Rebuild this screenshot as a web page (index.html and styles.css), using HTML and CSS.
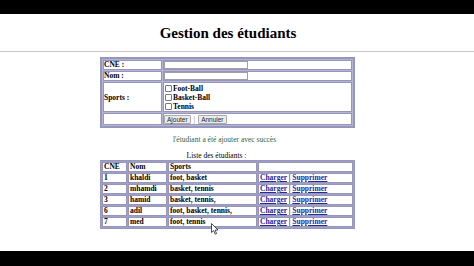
FILE: index.html
```html
<!DOCTYPE html>
<html lang="fr">
  <head>
    <meta charset="UTF-8"/>
    <link rel="stylesheet" href="styles.css">
    <title>Gestion des étudiants</title>
  </head>
  <body>
    <div class="letterbox"></div>
    <main class="page">
      <h1 class="page_title">Gestion des étudiants</h1>
      <hr class="page_rule"/>
      <div class="content">
        <form>
          <table class="formTable">
            <tr class="formTable_row">
              <td class="formTable_label">CNE :</td>
              <td><input class="formTable_input" type="text"/></td>
            </tr>
            <tr class="formTable_row">
              <td class="formTable_label">Nom :</td>
              <td><input class="formTable_input" type="text"/></td>
            </tr>
            <tr class="formTable_sports">
              <td class="formTable_label">Sports :</td>
              <td>
                <label class="sportOption"><span class="sportOption_box"></span>Foot-Ball</label>
                <label class="sportOption"><span class="sportOption_box"></span>Basket-Ball</label>
                <label class="sportOption"><span class="sportOption_box"></span>Tennis</label>
              </td>
            </tr>
            <tr class="formTable_buttons">
              <td></td>
              <td>
                <div class="buttonGroup">
                  <button class="formButton" type="button">Ajouter</button>
                  <span class="buttonGroup_sep">|</span>
                  <button class="formButton" type="button">Annuler</button>
                </div>
              </td>
            </tr>
          </table>
        </form>
        <p class="successMessage">l'étudiant a été ajouter avec succès</p>
        <p class="listTitle">Liste des étudiants :</p>
        <table class="studentTable">
          <tr>
            <td class="col_cne">CNE</td>
            <td class="col_nom">Nom</td>
            <td class="col_sports">Sports</td>
            <td></td>
          </tr>
          <tr>
            <td>1</td><td>khaldi</td><td>foot, basket</td>
            <td><a href="#">Charger</a> | <a href="#">Supprimer</a></td>
          </tr>
          <tr>
            <td>2</td><td>mhamdi</td><td>basket, tennis</td>
            <td><a href="#">Charger</a> | <a href="#">Supprimer</a></td>
          </tr>
          <tr>
            <td>3</td><td>hamid</td><td>basket, tennis,</td>
            <td><a href="#">Charger</a> | <a href="#">Supprimer</a></td>
          </tr>
          <tr>
            <td>6</td><td>adil</td><td>foot, basket, tennis,</td>
            <td><a href="#">Charger</a> | <a href="#">Supprimer</a></td>
          </tr>
          <tr>
            <td>7</td><td>med</td><td>foot, tennis</td>
            <td><a href="#">Charger</a> | <a href="#">Supprimer</a></td>
          </tr>
        </table>
      </div>
      <svg class="mouseCursor" width="8" height="12" viewBox="0 0 8 12">
        <path d="M0.5 0.5 L0.5 9.5 L2.6 7.6 L4.2 11.2 L5.6 10.6 L4.1 7.1 L7 7 Z" fill="#fff" stroke="#222" stroke-width="0.8" stroke-linejoin="round"/>
      </svg>
    </main>
    <div class="letterbox letterbox_bottom"></div>
  </body>
</html>
```

FILE: styles.css
```css
html, body {
  margin: 0;
  padding: 0;
}
body {
  width: 474px;
  height: 266px;
  display: flex;
  flex-direction: column;
  background-color: rgb(0, 0, 0);
  font-family: "Liberation Serif", "Times New Roman", serif;
  color: rgb(0, 0, 0);
  overflow: hidden;
}

.letterbox {
  height: 14px;
  background-color: rgb(0, 0, 0);
}
  .letterbox_bottom {
    height: 15px;
  }

.page {
  position: relative;
  flex: 1;
  background-color: rgb(255, 255, 255);
}
  .page_title {
    margin: 10px 0 0 0;
    padding-right: 18px;
    height: 18px;
    line-height: 18px;
    font-size: 15px;
    font-weight: bold;
    text-align: center;
    color: rgb(0, 0, 0);
  }
  .page_rule {
    margin: 9px 0 0 0;
    border: 0;
    border-top: 1px solid rgb(200, 200, 200);
    height: 0;
  }

.content {
  width: 255px;
  margin: 5px 0 0 100px;
  font-size: 7.5px;
}
  .content form {
    margin: 0;
  }

/* formulaire */
.formTable {
  width: 255px;
  border: 2px solid rgb(150, 150, 188);
  border-spacing: 1px;
  background-color: rgb(180, 180, 212);
  font-weight: bold;
}
  .formTable td {
    padding: 0;
    border: 1px solid rgb(150, 150, 188);
    background-color: rgb(255, 255, 255);
    vertical-align: middle;
  }
  .formTable .formTable_label {
    width: 57px;
  }
  .formTable_row td {
    height: 8px;
    line-height: 8px;
  }
  .formTable_sports td {
    height: 28px;
  }
  .formTable_buttons td {
    height: 10px;
  }
  .formTable_input {
    display: block;
    box-sizing: border-box;
    width: 84px;
    height: 8px;
    margin: 0;
    padding: 0;
    border: 1px solid rgb(160, 160, 170);
  }

.sportOption {
  display: flex;
  align-items: center;
  height: 9px;
  line-height: 9px;
}
  .sportOption_box {
    width: 5px;
    height: 5px;
    margin: 0 1px 0 1px;
    border: 1px solid rgb(120, 120, 120);
    border-radius: 1px;
    background-color: rgb(255, 255, 255);
  }

.buttonGroup {
  display: flex;
  align-items: center;
  gap: 3px;
}
  .formButton {
    height: 9px;
    padding: 0 2px;
    font-family: "Liberation Sans", Arial, sans-serif;
    font-size: 6.5px;
    line-height: 7px;
    color: rgb(30, 30, 30);
    background-color: rgb(235, 235, 235);
    border: 1px solid rgb(170, 170, 170);
    border-radius: 1px;
  }
  .buttonGroup_sep {
    font-weight: normal;
    color: rgb(120, 120, 120);
  }

/* messages */
.successMessage {
  margin: 7px 0 0 0;
  padding-right: 6px;
  text-align: center;
  line-height: 9px;
  color: rgb(55, 95, 55);
}
.listTitle {
  margin: 7px 0 0 0;
  padding-right: 22px;
  text-align: center;
  line-height: 9px;
}

/* liste */
.studentTable {
  width: 255px;
  margin-top: 0;
  border: 1px solid rgb(150, 150, 188);
  border-spacing: 1px;
  background-color: rgb(160, 160, 198);
  font-weight: bold;
}
  .studentTable td {
    height: 8px;
    line-height: 8px;
    padding: 0 0 0 1px;
    border: 1px solid rgb(150, 150, 188);
    background-color: rgb(255, 255, 255);
    white-space: nowrap;
  }
  .studentTable .col_cne {
    width: 22px;
  }
  .studentTable .col_nom {
    width: 36px;
  }
  .studentTable .col_sports {
    width: 86px;
  }
  .studentTable a {
    color: rgb(40, 40, 150);
  }

.mouseCursor {
  position: absolute;
  left: 211px;
  top: 209px;
}
```
